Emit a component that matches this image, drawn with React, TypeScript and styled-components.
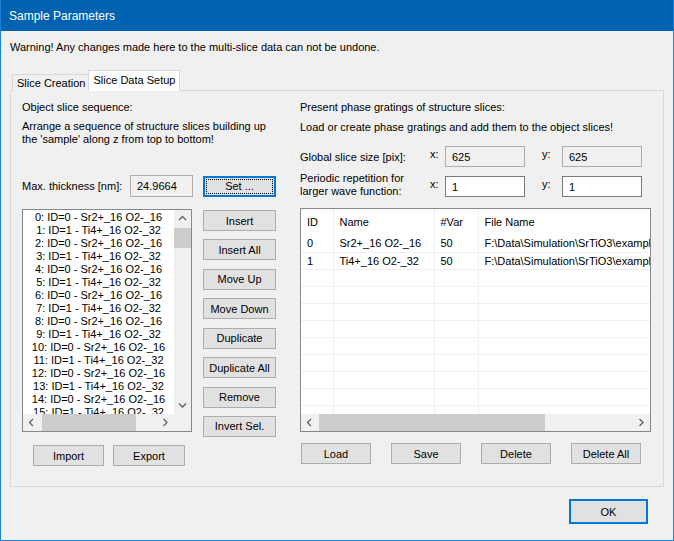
import React from "react";
import styled, { createGlobalStyle, css } from "styled-components";

const GlobalStyle = createGlobalStyle`
  html, body {
    margin: 0;
    padding: 0;
    background: #f0f0f0;
  }
  * {
    box-sizing: border-box;
  }
`;

const FONT = `"Liberation Sans", Arial, sans-serif`;

const Window = styled.div`
  width: 674px;
  height: 541px;
  display: flex;
  flex-direction: column;
  background: #f0f0f0;
  border: 1px solid #1883d7;
  border-top: none;
  font-family: ${FONT};
  font-size: 11px;
  color: #000;
  overflow: hidden;
`;

const TitleBar = styled.div`
  height: 31px;
  flex: none;
  display: flex;
  align-items: center;
  padding-left: 9px;
  margin: 0 -1px;
  background: #0063b1;
  color: #fff;
  font-size: 12px;
`;

const Body = styled.div`
  flex: 1;
  display: flex;
  flex-direction: column;
  padding: 0 9px;
`;

const Warning = styled.div`
  margin-top: 9px;
  line-height: 14px;
`;

const TabStrip = styled.div`
  display: flex;
  align-items: flex-end;
  height: 21px;
  margin-top: 16px;
  padding-left: 2px;
  position: relative;
  z-index: 1;
  margin-bottom: -1px;
`;

const Tab = styled.div<{ $active?: boolean }>`
  display: flex;
  align-items: center;
  justify-content: center;
  border: 1px solid #d9d9d9;
  border-bottom: none;
  ${(p) =>
    p.$active
      ? css`
          height: 21px;
          padding: 0 4px 2px;
          background: #fff;
          border-bottom: 1px solid #fff;
          margin-left: -1px;
        `
      : css`
          height: 17px;
          padding: 0 4px;
          background: #f0f0f0;
          border-right: none;
        `}
`;

const Panel = styled.div`
  height: 397px;
  border: 1px solid #d9d9d9;
  background: #f0f0f0;
  display: grid;
  grid-template-columns: 253px 352px;
  column-gap: 25px;
  padding: 9px 0 0 11px;
`;

const Column = styled.div`
  display: flex;
  flex-direction: column;
`;

const Heading = styled.div`
  line-height: 14px;
`;

const Para = styled.div<{ $lh?: number }>`
  margin-top: 6px;
  line-height: ${(p) => p.$lh ?? 14}px;
`;

const Row = styled.div<{ $top: number }>`
  display: flex;
  align-items: center;
  margin-top: ${(p) => p.$top}px;
`;

const Label = styled.div<{ $w: number }>`
  width: ${(p) => p.$w}px;
  flex: none;
`;

const Field = styled.div<{ $w: number; $readOnly?: boolean }>`
  width: ${(p) => p.$w}px;
  height: 22px;
  flex: none;
  display: flex;
  align-items: center;
  padding-left: 6px;
  border: 1px solid ${(p) => (p.$readOnly ? "#adadad" : "#7a7a7a")};
  background: ${(p) => (p.$readOnly ? "#f0f0f0" : "#fff")};
`;

const Button = styled.div<{ $w: number; $h?: number; $focused?: boolean }>`
  width: ${(p) => p.$w}px;
  height: ${(p) => p.$h ?? 21}px;
  flex: none;
  position: relative;
  display: flex;
  align-items: center;
  justify-content: center;
  background: #e1e1e1;
  border: 1px solid #adadad;
  ${(p) =>
    p.$focused &&
    css`
      border-color: #0078d7;
      box-shadow: inset 0 0 0 1px #0078d7;
    `}
`;

const FocusRing = styled.span`
  position: absolute;
  inset: 2px;
  border: 1px dotted #000;
  pointer-events: none;
`;

const ListRow = styled.div`
  display: flex;
  align-items: flex-start;
  margin-top: 12px;
`;

const ListBox = styled.div`
  width: 170px;
  height: 223px;
  flex: none;
  border: 1px solid #828790;
  background: #fff;
  display: grid;
  grid-template-columns: 1fr 17px;
  grid-template-rows: 1fr 17px;
  overflow: hidden;
`;

const Items = styled.div`
  padding-top: 1px;
  overflow: hidden;
  text-align: center;
  white-space: nowrap;
`;

const Item = styled.div`
  line-height: 13px;
  height: 13px;
`;

const VScroll = styled.div`
  background: #f0f0f0;
  display: flex;
  flex-direction: column;
`;

const HScroll = styled.div`
  background: #f0f0f0;
  display: flex;
  height: 17px;
`;

const Arrow = styled.div`
  width: 17px;
  height: 17px;
  flex: none;
  display: flex;
  align-items: center;
  justify-content: center;
`;

const Track = styled.div<{ $vertical?: boolean }>`
  flex: 1;
  display: flex;
  flex-direction: ${(p) => (p.$vertical ? "column" : "row")};
`;

const Thumb = styled.div<{ $vertical?: boolean }>`
  background: #cdcdcd;
  ${(p) =>
    p.$vertical
      ? css`
          width: 17px;
        `
      : css`
          height: 17px;
        `}
`;

const Corner = styled.div`
  background: #f0f0f0;
`;

const ButtonStack = styled.div`
  margin-left: 11px;
  margin-top: 1px;
  height: 227px;
  display: flex;
  flex-direction: column;
  justify-content: space-between;
`;

const ButtonRow = styled.div<{ $top: number; $gap: number; $pad: number }>`
  display: flex;
  gap: ${(p) => p.$gap}px;
  margin-top: ${(p) => p.$top}px;
  padding-left: ${(p) => p.$pad}px;
`;

const SizeGrid = styled.div<{ $top: number }>`
  display: grid;
  grid-template-columns: 128px 17px 80px 37px 80px;
  align-items: center;
  margin-top: ${(p) => p.$top}px;
  height: 21px;
`;

const AxisLabel = styled.div<{ $pad?: number }>`
  padding-left: ${(p) => p.$pad ?? 2}px;
  margin-top: -6px;
`;

const TwoLine = styled.div`
  line-height: 13px;
  margin-top: -3px;
`;

const SmallField = styled(Field)`
  height: 21px;
`;

const ListView = styled.div`
  width: 351px;
  height: 224px;
  margin-top: 12px;
  border: 1px solid #828790;
  background: #fff;
  display: flex;
  flex-direction: column;
  overflow: hidden;
`;

const GridArea = styled.div`
  flex: 1;
  overflow: hidden;
`;

const Table = styled.table`
  border-collapse: collapse;
  table-layout: fixed;
  width: 620px;
  font-size: 11px;
  font-family: ${FONT};
`;

const Th = styled.th<{ $w: number }>`
  width: ${(p) => p.$w}px;
  height: 26px;
  padding: 0 0 0 6px;
  text-align: left;
  font-weight: normal;
  border-right: 1px solid #f0f0f0;
  white-space: nowrap;
`;

const Td = styled.td`
  height: 17px;
  padding: 0 0 0 6px;
  border-right: 1px solid #f0f0f0;
  border-bottom: 1px solid #f0f0f0;
  white-space: nowrap;
  overflow: hidden;
`;

const Footer = styled.div`
  display: flex;
  justify-content: flex-end;
  padding: 12px 16px 0 0;
`;

const Chevron = ({ dir }: { dir: "up" | "down" | "left" | "right" }) => {
  const d = {
    up: "M1 5 L4.5 1.5 L8 5",
    down: "M1 1.5 L4.5 5 L8 1.5",
    left: "M5 1 L1.5 4.5 L5 8",
    right: "M1.5 1 L5 4.5 L1.5 8",
  }[dir];
  const vertical = dir === "up" || dir === "down";
  return (
    <svg
      width={vertical ? 9 : 7}
      height={vertical ? 7 : 9}
      viewBox={vertical ? "0 0 9 7" : "0 0 7 9"}
    >
      <path d={d} fill="none" stroke="#606060" strokeWidth="1.3" />
    </svg>
  );
};

const HBar = ({ left, width }: { left: number; width: number }) => (
  <HScroll>
    <Arrow>
      <Chevron dir="left" />
    </Arrow>
    <Track>
      <Thumb style={{ marginLeft: left, width }} />
    </Track>
    <Arrow>
      <Chevron dir="right" />
    </Arrow>
  </HScroll>
);

const slices = Array.from({ length: 16 }, (_, i) =>
  i % 2 === 0
    ? `${i}: ID=0 - Sr2+_16 O2-_16`
    : `${i}: ID=1 - Ti4+_16 O2-_32`
);

const sequenceButtons = [
  "Insert",
  "Insert All",
  "Move Up",
  "Move Down",
  "Duplicate",
  "Duplicate All",
  "Remove",
  "Invert Sel.",
];

const gratings = [
  { id: "0", name: "Sr2+_16 O2-_16", nvar: "50", file: "F:\\Data\\Simulation\\SrTiO3\\example\\SrTiO3_slc001.sli" },
  { id: "1", name: "Ti4+_16 O2-_32", nvar: "50", file: "F:\\Data\\Simulation\\SrTiO3\\example\\SrTiO3_slc002.sli" },
];

const EMPTY_ROWS = 9;

export default function App() {
  return (
    <>
      <GlobalStyle />
      <Window>
        <TitleBar>Sample Parameters</TitleBar>
        <Body>
          <Warning>
            Warning! Any changes made here to the multi-slice data can not be undone.
          </Warning>
          <TabStrip>
            <Tab>Slice Creation</Tab>
            <Tab $active>Slice Data Setup</Tab>
          </TabStrip>
          <Panel>
            <Column>
              <Heading>Object slice sequence:</Heading>
              <Para $lh={13}>
                Arrange a sequence of structure slices building up
                <br />
                the 'sample' along z from top to bottom!
              </Para>
              <Row $top={29}>
                <Label $w={108}>Max. thickness [nm]:</Label>
                <Field $w={63} $readOnly>
                  24.9664
                </Field>
                <Button $w={73} $focused style={{ marginLeft: 10 }}>
                  Set ...
                  <FocusRing />
                </Button>
              </Row>
              <ListRow>
                <ListBox>
                  <Items>
                    {slices.map((s) => (
                      <Item key={s}>{s}</Item>
                    ))}
                  </Items>
                  <VScroll>
                    <Arrow>
                      <Chevron dir="up" />
                    </Arrow>
                    <Track $vertical>
                      <Thumb $vertical style={{ marginTop: 1, height: 20 }} />
                    </Track>
                    <Arrow>
                      <Chevron dir="down" />
                    </Arrow>
                  </VScroll>
                  <HBar left={2} width={94} />
                  <Corner />
                </ListBox>
                <ButtonStack>
                  {sequenceButtons.map((b) => (
                    <Button key={b} $w={73}>
                      {b}
                    </Button>
                  ))}
                </ButtonStack>
              </ListRow>
              <ButtonRow $top={8} $gap={9} $pad={11}>
                <Button $w={71}>Import</Button>
                <Button $w={72}>Export</Button>
              </ButtonRow>
            </Column>

            <Column>
              <Heading>Present phase gratings of structure slices:</Heading>
              <Para>Load or create phase gratings and add them to the object slices!</Para>
              <SizeGrid $top={12}>
                <div>Global slice size [pix]:</div>
                <AxisLabel>x:</AxisLabel>
                <SmallField $w={80} $readOnly>
                  625
                </SmallField>
                <AxisLabel $pad={17}>y:</AxisLabel>
                <SmallField $w={80} $readOnly>
                  625
                </SmallField>
              </SizeGrid>
              <SizeGrid $top={8}>
                <TwoLine>
                  Periodic repetition for
                  <br />
                  larger wave function:
                </TwoLine>
                <AxisLabel>x:</AxisLabel>
                <SmallField $w={80}>1</SmallField>
                <AxisLabel $pad={17}>y:</AxisLabel>
                <SmallField $w={80}>1</SmallField>
              </SizeGrid>
              <ListView>
                <GridArea>
                  <Table>
                    <thead>
                      <tr>
                        <Th $w={32}>ID</Th>
                        <Th $w={101}>Name</Th>
                        <Th $w={44}>#Var</Th>
                        <Th $w={443}>File Name</Th>
                      </tr>
                    </thead>
                    <tbody>
                      {gratings.map((g) => (
                        <tr key={g.id}>
                          <Td>{g.id}</Td>
                          <Td>{g.name}</Td>
                          <Td>{g.nvar}</Td>
                          <Td>{g.file}</Td>
                        </tr>
                      ))}
                      {Array.from({ length: EMPTY_ROWS }, (_, i) => (
                        <tr key={`e${i}`}>
                          <Td />
                          <Td />
                          <Td />
                          <Td />
                        </tr>
                      ))}
                    </tbody>
                  </Table>
                </GridArea>
                <HBar left={1} width={226} />
              </ListView>
              <ButtonRow $top={11} $gap={20} $pad={1}>
                <Button $w={70}>Load</Button>
                <Button $w={70}>Save</Button>
                <Button $w={70}>Delete</Button>
                <Button $w={70}>Delete All</Button>
              </ButtonRow>
            </Column>
          </Panel>
          <Footer>
            <Button $w={79} $h={25} $focused>
              OK
            </Button>
          </Footer>
        </Body>
      </Window>
    </>
  );
}
